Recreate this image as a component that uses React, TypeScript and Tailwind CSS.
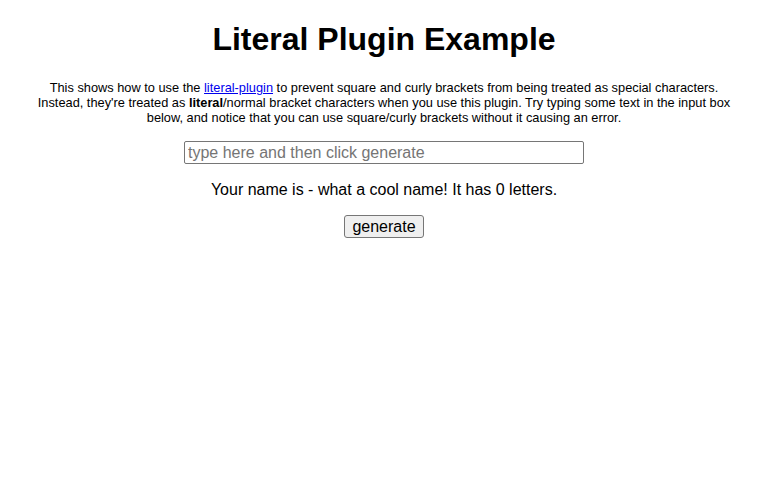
export default function App() {
  return (
    <div
      className="min-h-[480px] bg-white text-black text-center px-2"
      style={{ fontFamily: '"Liberation Sans", Arial, sans-serif' }}
    >
      <h1 className="pt-[21px] text-[32px] font-bold leading-[37px]">Literal Plugin Example</h1>
      <p className="mx-auto mt-[22px] max-w-[712px] text-[12.8px] leading-[15px]">
        This shows how to use the{" "}
        <a href="#" className="text-[#0000ee] underline">
          literal-plugin
        </a>{" "}
        to prevent square and curly brackets from being treated as special characters.
        <br />
        Instead, they're treated as <b>literal</b>/normal bracket characters when you use this plugin. Try
        typing some text in the input box below, and notice that you can use square/curly brackets
        without it causing an error.
      </p>
      <div className="mt-[16px] flex justify-center">
        <input
          type="text"
          placeholder="type here and then click generate"
          className="w-[400px] h-[23px] border border-[#767676] rounded-[2px] px-[3px] text-[16px] leading-[19px] placeholder:text-[#757575] outline-none"
          style={{ fontFamily: '"Liberation Sans", Arial, sans-serif' }}
        />
      </div>
      <p className="mt-[17px] text-[16px] leading-[18px]">Your name is - what a cool name! It has 0 letters.</p>
      <div className="mt-[16px] flex justify-center">
        <button className="h-[23px] px-[7px] border border-[#767676] rounded-[3px] bg-[#efefef] text-[16px] leading-[19px]">
          generate
        </button>
      </div>
    </div>
  );
}
